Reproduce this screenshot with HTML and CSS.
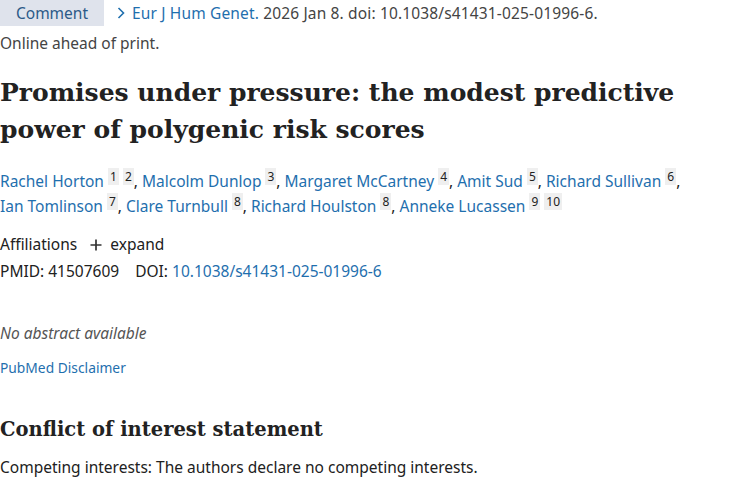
FILE: index.html
```html
<!DOCTYPE html>
<html lang="en">
<head>
<meta charset="utf-8">
<title>Promises under pressure</title>
<link rel="stylesheet" href="styles.css">
</head>
<body>
<main class="article">
  <div class="cite-row">
    <span class="comment-btn">Comment</span>
    <span class="citation"><svg class="chev" width="8" height="12" viewBox="0 0 8 12"><polyline points="1.5,1 6.5,6 1.5,11" fill="none" stroke="#1f6fae" stroke-width="1.6"/></svg><a class="journal" href="#">Eur J Hum Genet.</a> 2026 Jan 8. doi: 10.1038/s41431-025-01996-6.</span>
  </div>
  <div class="ahead">Online ahead of print.</div>
  <h1 class="title">Promises under pressure: the modest predictive power of polygenic risk scores</h1>
  <div class="authors">
    <a href="#">Rachel Horton</a> <sup class="aff">1</sup> <sup class="aff">2</sup>, <a href="#">Malcolm Dunlop</a> <sup class="aff">3</sup>, <a href="#">Margaret McCartney</a> <sup class="aff">4</sup>, <a href="#">Amit Sud</a> <sup class="aff">5</sup>, <a href="#">Richard Sullivan</a> <sup class="aff">6</sup>,<br><a href="#">Ian Tomlinson</a> <sup class="aff">7</sup>, <a href="#">Clare Turnbull</a> <sup class="aff">8</sup>, <a href="#">Richard Houlston</a> <sup class="aff">8</sup>, <a href="#">Anneke Lucassen</a> <sup class="aff">9</sup> <sup class="aff">10</sup>
  </div>
  <div class="affiliations">Affiliations <svg class="plus" width="12" height="12" viewBox="0 0 12 12"><path d="M6 0.5V11.5M0.5 6H11.5" stroke="#333" stroke-width="1.7" fill="none"/></svg> expand</div>
  <div class="ids">PMID: 41507609 <span class="doi-label">DOI:</span> <a href="#">10.1038/s41431-025-01996-6</a></div>
  <p class="no-abstract">No abstract available</p>
  <a class="disclaimer" href="#">PubMed Disclaimer</a>
  <h2 class="section-title">Conflict of interest statement</h2>
  <p class="coi">Competing interests: The authors declare no competing interests.</p>
</main>
</body>
</html>
```
FILE: styles.css
```css
html, body {
  margin: 0;
  padding: 0;
  background: #ffffff;
}
body {
  font-family: "Noto Sans", "Open Sans", sans-serif;
  font-size: 15.5px;
  line-height: 25px;
  color: #212121;
}
a {
  color: #1f6fae;
  text-decoration: none;
}
.article {
  display: flex;
  flex-direction: column;
  align-items: flex-start;
}
.cite-row {
  display: flex;
  align-items: center;
  gap: 13px;
  height: 26px;
}
.comment-btn {
  display: flex;
  align-items: center;
  justify-content: center;
  width: 104px;
  height: 26px;
  background: #dfe3ec;
  color: #2c5a88;
  font-size: 15.5px;
}
.citation {
  display: flex;
  align-items: center;
  color: #444;
  white-space: pre;
  letter-spacing: 0.15px;
}
.chev {
  margin-right: 7px;
}
.ahead {
  margin-top: 6px;
  line-height: 22px;
  color: #444;
}
.title {
  font-family: "DejaVu Serif", "Liberation Serif", serif;
  font-weight: bold;
  font-size: 25px;
  line-height: 37px;
  margin: 20px 0 0;
  color: #222;
  max-width: 700px;
}
.authors {
  margin-top: 21px;
  line-height: 25px;
  color: #212121;
}
.aff {
  font-size: 12px;
  background: #efefef;
  color: #212121;
  padding: 0 2px;
  vertical-align: 6px;
  line-height: 1;
}
.affiliations {
  display: flex;
  align-items: center;
  margin-top: 13px;
  color: #212121;
  white-space: pre;
}
.plus {
  margin: 0 4px 0 9px;
}
.ids {
  margin-top: 2px;
}
.doi-label {
  margin-left: 12px;
}
.no-abstract {
  margin: 37px 0 0;
  font-style: italic;
  color: #555;
}
.disclaimer {
  margin-top: 12px;
  font-size: 13.8px;
  line-height: 20px;
}
.section-title {
  font-family: "DejaVu Serif", "Liberation Serif", serif;
  font-weight: bold;
  font-size: 19.5px;
  line-height: 30px;
  margin: 37px 0 0;
  color: #222;
}
.coi {
  margin: 10px 0 0;
}
```
